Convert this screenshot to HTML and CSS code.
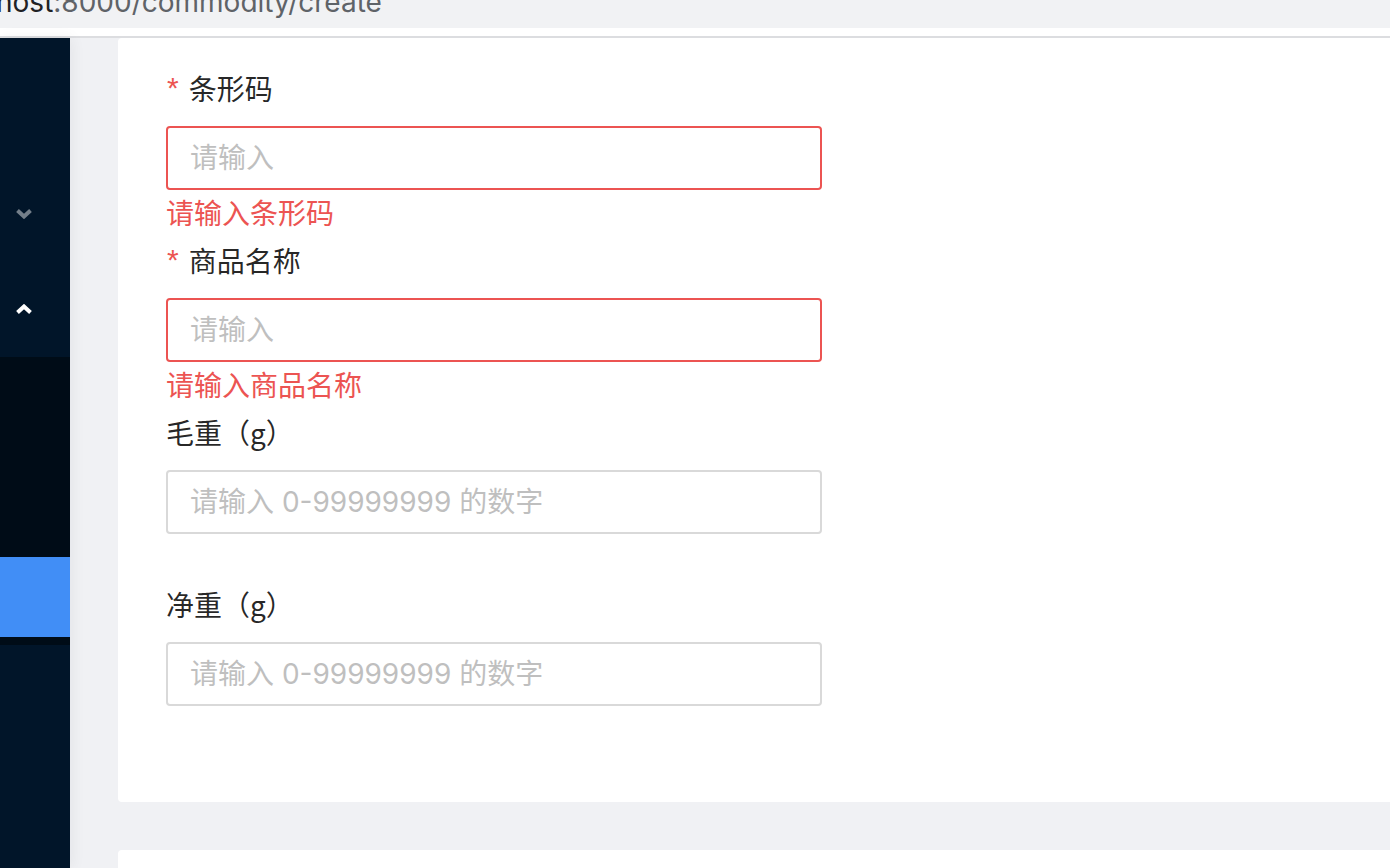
FILE: index.html
```html
<!DOCTYPE html>
<html lang="zh-CN">
<head>
<meta charset="utf-8">
<title>commodity create</title>
<link rel="stylesheet" href="styles.css">
</head>
<body>
<div class="urlbar"><div class="url"><span class="host">host</span>:8000/commodity/create</div></div>
<div class="urlgap"></div>
<div class="app">
  <aside class="sider">
    <div class="sider-top"></div>
    <div class="sub-title">
      <svg class="chev chev-down" viewBox="0 0 18 11" width="18" height="11"><polyline points="2.5,2.5 9,8.5 15.5,2.5" fill="none" stroke="currentColor" stroke-width="4"/></svg>
    </div>
    <div class="sub-title open">
      <svg class="chev chev-up" viewBox="0 0 18 11" width="18" height="11"><polyline points="2.5,8.5 9,2.5 15.5,8.5" fill="none" stroke="currentColor" stroke-width="4"/></svg>
    </div>
    <div class="submenu">
      <div class="sub-item"></div>
      <div class="sub-item"></div>
      <div class="sub-item selected"></div>
    </div>
  </aside>
  <main class="content">
    <section class="card card-form">
      <form class="form">
        <div class="item has-error">
          <label class="label"><span class="req">*</span>条形码</label>
          <input class="input" type="text" placeholder="请输入">
          <div class="explain">请输入条形码</div>
        </div>
        <div class="item has-error">
          <label class="label"><span class="req">*</span>商品名称</label>
          <input class="input" type="text" placeholder="请输入">
          <div class="explain">请输入商品名称</div>
        </div>
        <div class="item">
          <label class="label">毛重（g）</label>
          <input class="input" type="text" placeholder="请输入 0-99999999 的数字">
        </div>
        <div class="item">
          <label class="label">净重（g）</label>
          <input class="input" type="text" placeholder="请输入 0-99999999 的数字">
        </div>
      </form>
    </section>
    <section class="card card-next"></section>
  </main>
</div>
</body>
</html>
```

FILE: styles.css
```css
* { box-sizing: border-box; }
html, body {
  margin: 0;
  padding: 0;
  width: 1390px;
  height: 868px;
  overflow: hidden;
  background: #f0f1f4;
  font-family: Inter, "Liberation Sans", "Noto Sans CJK SC", sans-serif;
}
.urlbar {
  height: 28px;
  background: #f1f2f4;
  overflow: hidden;
}
.url {
  font-family: Inter, "Liberation Sans", sans-serif;
  font-size: 28px;
  line-height: 28px;
  margin-top: -12px;
  margin-left: -4px;
  color: #5f6368;
  white-space: nowrap;
}
.host { color: #202124; }
.urlgap {
  height: 10px;
  background: #fff;
  border-bottom: 2px solid #dcdde0;
}
.app {
  display: flex;
  height: 830px;
}
.sider {
  width: 70px;
  flex: none;
  background: #011529;
  display: flex;
  flex-direction: column;
  box-shadow: 2px 0 14px rgba(0, 21, 41, 0.06);
  position: relative;
  z-index: 1;
}
.sider-top { height: 127px; flex: none; }
.sub-title {
  height: 80px;
  margin: 8px 0;
  display: flex;
  align-items: center;
  justify-content: center;
  padding-right: 22px;
  flex: none;
}
.chev { display: block; }
.chev-down { color: rgba(255, 255, 255, 0.45); }
.chev-up { color: #ffffff; }
.submenu {
  background: #000c17;
  padding: 8px 0;
  display: flex;
  flex-direction: column;
  gap: 16px;
  flex: none;
}
.sub-item { height: 80px; }
.sub-item.selected { background: #418ef6; }
.content {
  flex: 1;
  padding-left: 48px;
  display: flex;
  flex-direction: column;
  gap: 48px;
  overflow: hidden;
}
.card {
  background: #fff;
  border-radius: 4px 0 0 4px;
  flex: none;
}
.card-form {
  height: 764px;
  padding: 28px 48px 0;
}
.card-next { height: 60px; }
.form {
  width: 656px;
  display: flex;
  flex-direction: column;
}
.item {
  display: flex;
  flex-direction: column;
  margin-bottom: 48px;
}
.item.has-error { margin-bottom: 0; }
.label {
  display: flex;
  align-items: center;
  height: 44px;
  margin-bottom: 16px;
  font-size: 28px;
  line-height: 44px;
  color: rgba(0, 0, 0, 0.85);
  font-family: "Noto Sans CJK SC", sans-serif;
}
.req {
  color: #ec5452;
  margin-right: 10px;
  margin-left: 1px;
  font-size: 30px;
  line-height: 44px;
  font-family: "Liberation Sans", sans-serif;
}
.input {
  height: 64px;
  width: 656px;
  border: 2px solid #d9d9d9;
  border-radius: 4px;
  padding: 0 22px;
  font-size: 28px;
  font-family: Inter, "Noto Sans CJK SC", sans-serif;
  color: rgba(0, 0, 0, 0.85);
  background: #fff;
  outline: none;
  margin: 0;
}
.input::placeholder { color: #bfbfbf; }
.has-error .input { border-color: #ec5452; }
.explain {
  height: 48px;
  line-height: 44px;
  font-size: 28px;
  color: #ec5452;
  font-family: "Noto Sans CJK SC", sans-serif;
}
```
